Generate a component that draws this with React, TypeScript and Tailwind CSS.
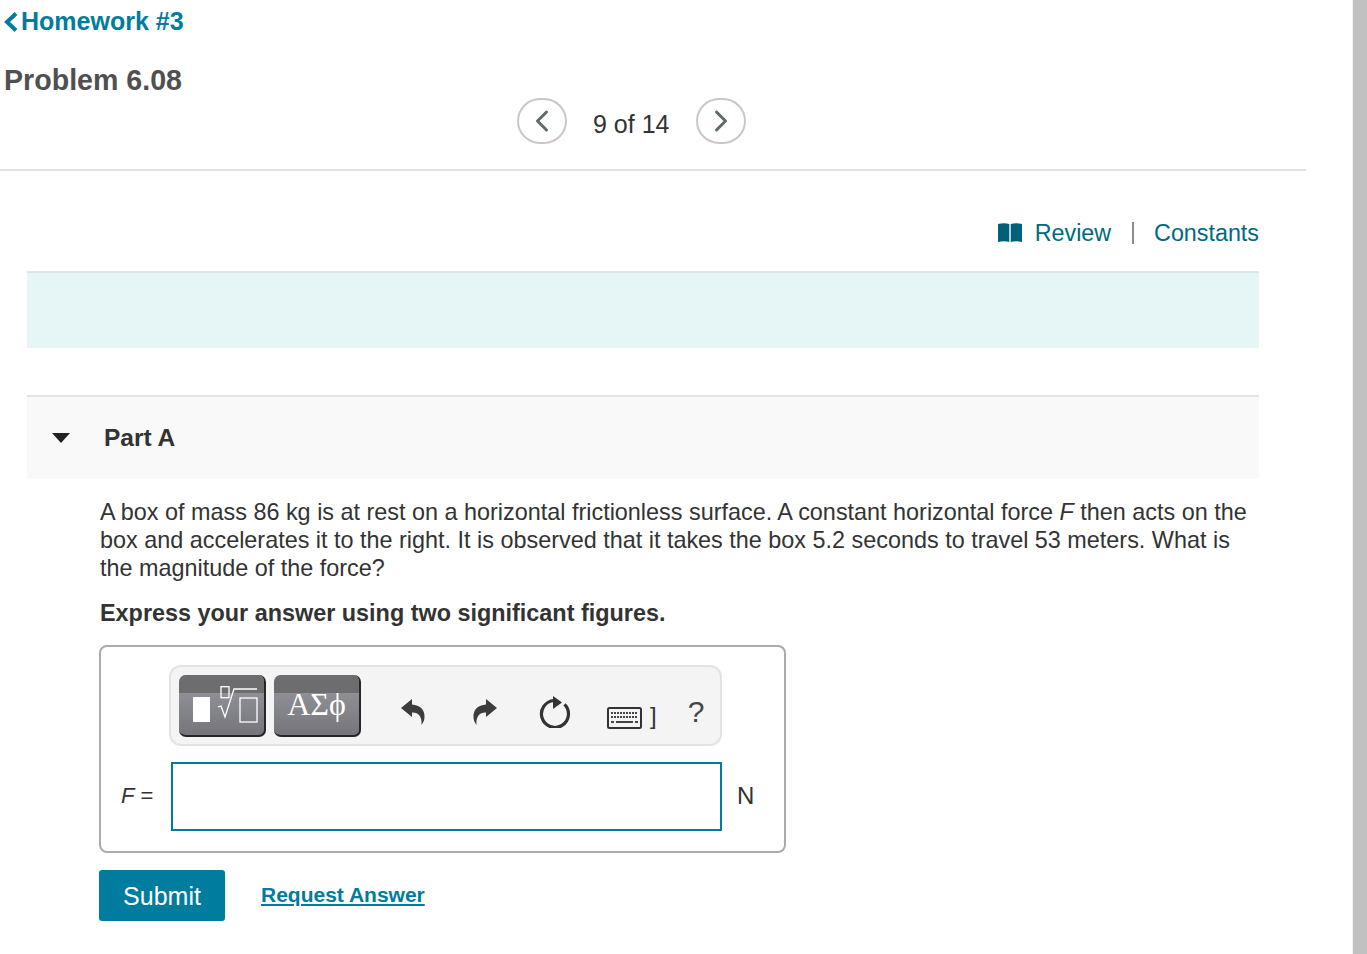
import { ChevronLeft, ChevronRight } from "lucide-react";

function UndoIcon({ flip }: { flip?: boolean }) {
  return (
    <svg width="26" height="30" viewBox="0 0 26 30" className={flip ? "-scale-x-100" : ""}>
      <path d="M1 11 L12 2 V7.5 C20 8 25 13 24.5 20 C24.4 23 23.4 25.5 21.5 28 C22 22 20.5 15.5 12 15.5 V20 Z" fill="#3c3c3c" />
    </svg>
  );
}

function KeyboardIcon() {
  const dots = [0, 1, 2, 3, 4, 5, 6, 7, 8];
  return (
    <svg width="35" height="22" viewBox="0 0 35 22">
      <rect x="1" y="1" width="33" height="20" rx="1.5" fill="none" stroke="#333" strokeWidth="2" />
      {dots.map((d) => (
        <rect key={d} x={4 + d * 3} y="5" width="2" height="2" fill="#444" />
      ))}
      {dots.map((d) => (
        <rect key={d} x={4 + d * 3} y="9" width="2" height="2" fill="#444" />
      ))}
      <rect x="4" y="14" width="3" height="2" fill="#444" />
      <rect x="9" y="14" width="17" height="2" fill="#444" />
      <rect x="28" y="14" width="3" height="2" fill="#444" />
    </svg>
  );
}

function ToolButton({ width, children }: { width: string; children: React.ReactNode }) {
  return (
    <div className={`${width} relative h-[62px] overflow-hidden rounded-[7px] border-b-2 border-r-2 border-[#26262a] bg-gradient-to-b from-[#9a9aa2] to-[#75757b]`}>
      <div className="h-[18px] bg-[#6d6d6f]" />
      {children}
    </div>
  );
}

export default function App() {
  return (
    <div className="flex h-[954px] overflow-hidden bg-white font-['Liberation_Sans',sans-serif] text-[#333]">
      <div className="w-[1352px] shrink-0">
        <div className="w-[1306px] border-b-2 border-[#e3e3e3]">
          <a className="flex h-[43px] items-center pl-[4px] text-[25px] font-bold text-[#007c9e]">
            <svg width="14" height="20" viewBox="0 0 14 20" fill="none" stroke="#007c9e" strokeWidth="4" className="mr-[3px]">
              <path d="M12 1.5 L3 10 L12 18.5" />
            </svg>
            <span>Homework #3</span>
          </a>
          <h1 className="-mb-[5px] pl-1 pt-[16px] text-[28.6px] leading-[42px] font-bold text-[#505050]">Problem 6.08</h1>
          <div className="flex h-[73px] items-start pl-[517px] pt-[2px]">
            <button className="grid h-[46px] w-[50px] place-items-center rounded-full border-2 border-[#c8c8c8] text-[#5f6b6b]">
              <ChevronLeft size={36} strokeWidth={2} />
            </button>
            <span className="ml-[26px] mr-[27px] mt-[11px] text-[25px] leading-[30px]">9 of 14</span>
            <button className="grid h-[46px] w-[50px] place-items-center rounded-full border-2 border-[#c8c8c8] text-[#5f6b6b]">
              <ChevronRight size={36} strokeWidth={2} />
            </button>
          </div>
        </div>

        <div className="w-[1259px] pl-[27px]">
          <div className="flex h-[100px] items-center justify-end pt-[24px] text-[23.3px] text-[#006a80]">
            <svg width="24" height="20" viewBox="0 0 24 20" className="mr-[13px]">
              <path d="M0 1 C4 0 8 0 11.3 1 V19 C8 18 4 18 0 19 Z M12.7 1 C16 0 20 0 24 1 V19 C20 18 16 18 12.7 19 Z" fill="#00607a" />
            </svg>
            <span>Review</span>
            <span className="ml-[21px] mr-[20px] h-[22px] w-[2px] bg-[#8a8a8a]" />
            <span>Constants</span>
          </div>
          <div className="h-[77px] border-t-2 border-[#e0e3e3] bg-[#e6f5f6]" />
          <div className="mt-[47px] flex h-[84px] items-center border-t-2 border-[#e3e3e3] bg-[#f9f9f9]">
            <span className="ml-[25px] h-0 w-0 border-x-[9px] border-t-[10px] border-x-transparent border-t-[#222]" />
            <h2 className="ml-[34px] pt-[1px] text-[24.5px] font-bold text-[#333]">Part A</h2>
          </div>

          <div className="pl-[72px]">
            <p className="ml-px mt-[19px] text-[23.4px] leading-[28px]">
              A box of mass 86 kg is at rest on a horizontal frictionless surface. A constant horizontal force <i>F</i> then acts on the box and accelerates it to the right. It is observed that it takes the box 5.2 seconds to travel 53 meters. What is the magnitude of the force?
            </p>
            <p className="ml-px mt-[17px] text-[23.4px] leading-[28px] font-bold">Express your answer using two significant figures.</p>

            <div className="mt-[18px] h-[208px] w-[687px] rounded-[8px] border-2 border-[#ababab] pl-[68px] pt-[18px]">
              <div className="flex h-[81px] w-[553px] items-center rounded-[12px] border-2 border-[#e3e3e3] bg-[#f4f4f4] pl-[8px]">
                <ToolButton width="w-[87px]">
                  <div className="absolute left-[14px] top-[22px] h-[25px] w-[17px] bg-white" />
                  <svg width="40" height="38" viewBox="0 0 40 38" fill="none" stroke="#fff" strokeWidth="1.3" className="absolute left-[39px] top-[11px]">
                    <rect x="3" y="0.7" width="8" height="11" />
                    <path d="M0 21 L3 20 L7 31 L16 3 H39" />
                    <rect x="22" y="12" width="17" height="24" />
                  </svg>
                </ToolButton>
                <div className="w-2" />
                <ToolButton width="w-[87px]">
                  <span className="absolute inset-x-0 top-[7px] text-center font-['Liberation_Serif',serif] text-[32px] leading-[44px] text-white">ΑΣϕ</span>
                </ToolButton>
                <div className="ml-[39px] flex items-center pt-[12px]"><UndoIcon /></div>
                <div className="ml-[46px] flex items-center pt-[12px]"><UndoIcon flip /></div>
                <svg width="32" height="36" viewBox="0 0 32 36" fill="none" className="ml-[41px] mt-[8px]">
                  <path d="M15 8.5 A13.5 13.5 0 1 0 25.5 12.4" stroke="#333" strokeWidth="3.2" />
                  <path d="M14 4 L23 10.5 L14 17 Z" fill="#333" />
                </svg>
                <div className="ml-[36px] mt-[24px]"><KeyboardIcon /></div>
                <span className="ml-[8px] mt-[20px] text-[24px] leading-none">]</span>
                <span className="ml-[31px] mt-[-6px] translate-y-[9px] text-[30px] leading-none text-[#444]">?</span>
              </div>
              <div className="-ml-[68px] mt-[16px] flex items-center">
                <span className="mb-[2px] w-[70px] pl-[20px] text-[22px] leading-none"><i>F</i> =</span>
                <input className="h-[69px] w-[551px] border-2 border-[#007c9e] bg-white" />
                <span className="mb-[2px] ml-[15px] text-[24px] leading-none">N</span>
              </div>
            </div>

            <div className="mt-[17px] flex items-center">
              <button className="h-[51px] w-[126px] rounded-[3px] bg-[#007c9e] pt-[3px] text-[25px] text-white">Submit</button>
              <a className="mb-[2px] ml-[36px] text-[21px] font-bold text-[#007c9e] underline">Request Answer</a>
            </div>
          </div>
        </div>
      </div>
      <div className="w-px bg-[#f2f2f2]" />
      <div className="w-[14px] bg-[#c1c1c1]" />
    </div>
  );
}
